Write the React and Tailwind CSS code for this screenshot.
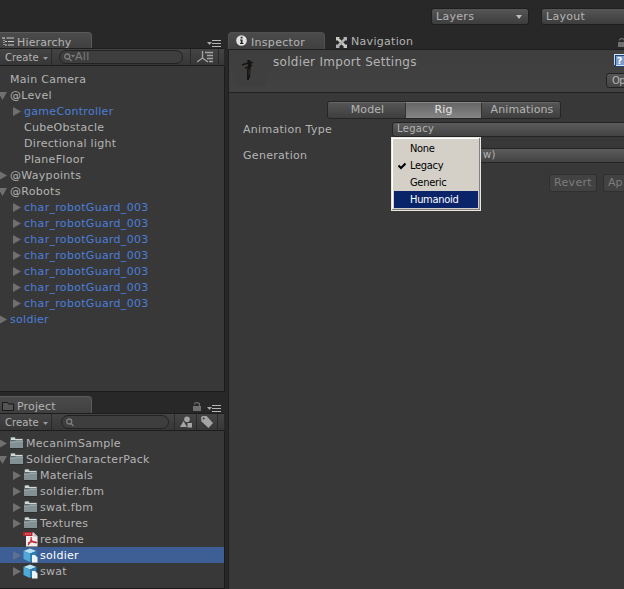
import React, { Fragment } from 'react'
import clsx from 'clsx'

const hierarchy = [
  { name: 'Main Camera', depth: 0 },
  { name: '@Level', depth: 0, arrow: 'down' },
  { name: 'gameController', depth: 1, arrow: 'right', prefab: true },
  { name: 'CubeObstacle', depth: 1 },
  { name: 'Directional light', depth: 1 },
  { name: 'PlaneFloor', depth: 1 },
  { name: '@Waypoints', depth: 0, arrow: 'right' },
  { name: '@Robots', depth: 0, arrow: 'down' },
  ...Array.from({ length: 7 }, () => ({ name: 'char_robotGuard_003', depth: 1, arrow: 'right', prefab: true })),
  { name: 'soldier', depth: 0, arrow: 'right', prefab: true },
]

const assets = [
  { name: 'MecanimSample', depth: 0, arrow: 'right', icon: 'folder' },
  { name: 'SoldierCharacterPack', depth: 0, arrow: 'down', icon: 'folder' },
  { name: 'Materials', depth: 1, arrow: 'right', icon: 'folder' },
  { name: 'soldier.fbm', depth: 1, arrow: 'right', icon: 'folder' },
  { name: 'swat.fbm', depth: 1, arrow: 'right', icon: 'folder' },
  { name: 'Textures', depth: 1, arrow: 'right', icon: 'folder' },
  { name: 'readme', depth: 1, icon: 'pdf' },
  { name: 'soldier', depth: 1, arrow: 'right', icon: 'model', selected: true },
  { name: 'swat', depth: 1, arrow: 'right', icon: 'model' },
]

const App = () => {
  return (
    <div className="flex h-[589px] w-[624px] flex-col overflow-hidden whitespace-nowrap bg-[#282828] font-['DejaVu_Sans',sans-serif] text-[11px] leading-4 tracking-[0.3px] text-[#b4b4b4]">
      <div className="flex h-8 shrink-0 gap-3 pl-[431px] pt-2">
        <div className="flex h-[17px] w-[98px] shrink-0 items-center justify-between rounded-[3px] border border-[#1f1f1f] bg-linear-to-b from-[#565656] to-[#3d3d3d] pl-1 pr-1.5">
          <span>Layers</span>
          <Caret />
        </div>
        <div className="flex h-[17px] w-[98px] shrink-0 items-center rounded-[3px] border border-[#1f1f1f] bg-linear-to-b from-[#565656] to-[#3d3d3d] pl-1">
          Layout
        </div>
      </div>
      <div className="flex min-h-0 flex-1 gap-[3px]">
        <div className="flex w-[225px] shrink-0 flex-col gap-1">
          <HierarchyPanel />
          <ProjectPanel />
        </div>
        <Inspector />
      </div>
    </div>
  )
}

export default App

const HierarchyPanel = () => (
  <div className="flex h-[360px] shrink-0 flex-col">
    <div className="flex h-4 shrink-0 items-end justify-between">
      <PanelTab title="Hierarchy">
        <svg className="mb-0.5 mr-[3px] h-[9px] w-3" viewBox="0 0 12 9" stroke="#c8c8c8" strokeWidth="1.2" fill="none">
          <path d="M0 1h3M4.500 1h7.500M3 4.500h2M6 4.500h6M3 8h2M6 8h6" />
          <path d="M2 1v7" strokeDasharray="1 1" />
        </svg>
      </PanelTab>
      <MenuIcon />
    </div>
    <Toolbar>
      <div className="ml-[7px] flex h-3.5 w-[124px] items-center rounded-full border border-[#222] bg-[#3e3e3e] pl-1 text-[#7f7f7f]">
        <SearchIcon arrow />
        <span className="-ml-px text-[11px]">All</span>
      </div>
      <div className="ml-[7px] flex h-full w-[29px] items-center justify-center border-x border-[#292929]">
        <svg className="h-3 w-4" viewBox="0 0 16 12" fill="none" stroke="#a5a5a5" strokeWidth="1.3">
          <path d="M5.5 0v7L0 11M5.5 7L11 11M8 1.5h8M10 4.5h6M10 7.5h6M12 10.5h4" />
        </svg>
      </div>
    </Toolbar>
    <Tree rows={hierarchy} className="pt-[5px]" />
  </div>
)

const ProjectPanel = () => (
  <div className="flex min-h-0 flex-1 flex-col">
    <div className="flex h-[17px] shrink-0 items-end justify-between">
      <PanelTab title="Project">
        <svg className="mb-[3px] mr-[3px] h-3 w-3" viewBox="0 0 12 12">
          <path d="M.5 10.500v-8h5l1 1.500h5v6.500z" fill="#555" stroke="#171717" />
        </svg>
      </PanelTab>
      <div className="flex items-end">
        <LockIcon className="mb-[2px] mr-1.5 h-[9px] w-2" />
        <MenuIcon />
      </div>
    </div>
    <Toolbar>
      <div className="ml-[9px] flex h-3.5 w-[108px] items-center rounded-full border border-[#222] bg-[#3e3e3e] pl-1">
        <SearchIcon />
      </div>
      <div className="ml-[5px] flex h-full w-[22px] items-center justify-center border-l border-[#292929]">
        <svg className="h-3 w-3" viewBox="0 0 12 12" fill="#a5a5a5">
          <circle cx="7" cy="3.2" r="2.8" />
          <path d="M3.5 5L7 11H0zM7.5 7H12v4.5H7.5z" />
        </svg>
      </div>
      <div className="flex h-full w-[22px] items-center justify-center border-x border-[#292929]">
        <svg className="h-3 w-3" viewBox="0 0 12 12">
          <path d="M0 1.5L1.5 0h4L12 7l-4.5 5L.5 5.5z" fill="#a5a5a5" />
          <circle cx="2.7" cy="2.6" r="1" fill="#3a3a3a" />
        </svg>
      </div>
    </Toolbar>
    <Tree rows={assets} className="pt-1" />
  </div>
)

const PanelTab = ({ title, children }) => (
  <div className="flex h-full w-[92px] items-center rounded-tr-[4px] border-r border-t border-[#5a5a5a] bg-linear-to-b from-[#4b4b4b] to-[#404040] pl-[2px] pt-1">
    {children}
    <span className="tracking-[0.15px]">{title}</span>
  </div>
)

const Toolbar = ({ children }) => (
  <div className="flex h-[18px] w-[224px] shrink-0 items-center border-y border-[#1d1d1d] bg-linear-to-b from-[#444] to-[#373737]">
    <div className="flex h-full w-[52px] items-center justify-between border-r border-[#292929] pl-[5px] pr-[3px] pt-0.5 text-[10px] tracking-[0.1px]">
      <span>Create</span>
      <svg className="h-[3px] w-[5px]" viewBox="0 0 5 3"><path d="M0 0h5L2.5 3z" fill="#999" /></svg>
    </div>
    {children}
  </div>
)

const Tree = ({ rows, className }) => (
  <div className={clsx('flex min-h-0 w-[225px] flex-1 flex-col border-b border-r border-[#1b1b1b] bg-[#383838]', className)}>
    {rows.map((row, i) => (
      <div
        key={i}
        className={clsx(
          'flex h-4 shrink-0 items-center',
          row.depth ? 'pl-3' : '-ml-0.5',
          row.selected ? 'bg-[#3e5f96] text-white' : row.prefab && 'text-[#4c7eda]'
        )}
      >
        <span className={clsx('flex shrink-0', row.icon ? 'w-[11px]' : 'w-3')}>
          {row.arrow && <Arrow dir={row.arrow} dim={row.selected} />}
        </span>
        {row.icon && <AssetIcon type={row.icon} />}
        <span className="pt-0.5">{row.name}</span>
      </div>
    ))}
  </div>
)

const Arrow = ({ dir, dim }) => (
  <svg className="h-[9px] w-[9px]" viewBox="0 0 9 9" fill={dim ? '#60718f' : '#707070'}>
    <path d={dir === 'down' ? 'M0 1h9L4.5 9z' : 'M1 0v9l8-4.5z'} />
  </svg>
)

const AssetIcon = ({ type }) => {
  if (type === 'pdf') {
    return (
      <svg className="mr-0.5 h-[15px] w-[15px] shrink-0" viewBox="0 0 15 15">
        <path d="M3 .5h7.500l4 4v10H3z" fill="#f3eeee" />
        <path d="M10.500 .5v4h4z" fill="#bdbdbd" />
        <path d="M0 0h9.500v4H0z" fill="#b8202b" />
        <path d="M2 2h6" stroke="#e9a3a7" strokeDasharray="1.5 .7" />
        <path d="M8 5c1 4-1 6-3 8M8 7c1 3 3 4 6 3.500M5 11c2-1 5-2 8-1" fill="none" stroke="#c22a35" strokeWidth="1.3" />
      </svg>
    )
  }
  if (type === 'model') {
    return (
      <svg className="mr-0.5 h-[15px] w-[15px] shrink-0" viewBox="0 0 15 15">
        <path d="M.5 3L7 .5 13.500 3 7 5.500z" fill="#b5e3f6" />
        <path d="M.5 3L7 5.500V14L.5 11z" fill="#51a9d8" />
        <path d="M7 5.500L13.500 3v8L7 14z" fill="#2d7fb3" />
        <path d="M9 7h3l2.500 2.500V14.500H9z" fill="#edf3f6" />
      </svg>
    )
  }
  return (
    <svg className="mr-0.5 h-[15px] w-[15px] shrink-0" viewBox="0 0 15 15">
      <path d="M1 12.500V2l1-1h4l1 1.500h7v10z" fill="#5d696b" />
      <path d="M2 1.500h4V3h7.500v1H2z" fill="#d3d9da" />
      <path d="M1 6h4.500l1-1H14v7.500H1z" fill="#829194" />
      <path d="M1 6h4.500l1-1H14" fill="none" stroke="#b6c3c5" strokeWidth=".8" />
      <path d="M1 12.500h13" stroke="#2a2e2f" />
    </svg>
  )
}

const Inspector = () => (
  <div className="flex min-w-0 flex-1 flex-col">
    <div className="flex h-[17px] shrink-0 items-end">
      <div className="flex h-full w-[97px] shrink-0 items-center rounded-t-[4px] border-x border-t border-[#505050] bg-linear-to-b from-[#4b4b4b] to-[#404040] pl-[7px] pt-[3px]">
        <svg className="mb-1 mr-[4px] h-[11px] w-[11px]" viewBox="0 0 11 11">
          <circle cx="5.5" cy="5.5" r="5.300" fill="#e2e2e2" />
          <path d="M4.700 1.800h1.800v1.600H4.700zM4 4.500h2.500v3.600h1V9H4v-.9h.8V5.400H4z" fill="#222" />
        </svg>
        <span>Inspector</span>
      </div>
      <div className="flex h-full shrink-0 items-center pl-[11px] pt-[3px]">
        <svg className="mr-1 h-[11px] w-[11px]" viewBox="0 0 11 11" fill="#c8c8c8">
          <path d="M0 0h4L2.900 1.100l7 7L11 7v4H7l1.100-1.100-7-7L0 4z" />
          <path d="M11 0v4L9.900 2.900l-7 7L4 11H0V7l1.100 1.100 7-7L7 0z" fill="#b0b0b0" />
        </svg>
        <span className="w-[62px]">Navigation</span>
      </div>
      <LockIcon className="mb-[2px] ml-[205px] h-[9px] w-2 shrink-0" />
    </div>
    <div className="flex min-h-0 flex-1 flex-col border-l border-t border-[#1f1f1f] bg-[#383838]">
      <div className="flex h-[43px] shrink-0 border-b border-[#232323] bg-linear-to-b from-[#3e3e3e] to-[#424242]">
        <div className="ml-1.5 mt-1 h-8 w-8 shrink-0 bg-[#3f3f3f] pl-1.5 pt-1">
          <svg className="h-[24px] w-[14px]" viewBox="0 0 14 24" fill="none" stroke="#171513">
            <path d="M8 2v3M8.500 5l-1 15" strokeWidth="3" />
            <path d="M1 7l6-2 5-.5M4 10l4-1 3-2" strokeWidth="1.6" />
            <path d="M7 11v11" strokeWidth="2" />
            <path d="M8 11v6" stroke="#3a2c1b" />
          </svg>
        </div>
        <span className="ml-1.5 mt-1 w-[332px] shrink-0 text-[12px]">soldier Import Settings</span>
        <div className="ml-px flex shrink-0 flex-col pt-[3px]">
          <svg className="ml-[7px] h-[15px] w-[15px]" viewBox="0 0 15 15">
            <path d="M1 1h14v13H3l-2-2z" fill="#1c447b" />
            <path d="M3 3h12v9H3z" fill="#7c9dcb" />
            <path d="M1.500 1v11" stroke="#c6dbf3" />
            <path d="M2 1.500h13M3 12.500h12" stroke="#dbe5f2" />
            <text x="4" y="10.500" fill="#fff" fontSize="9" fontWeight="bold">?</text>
          </svg>
          <div className="mt-[5px] flex h-[15px] w-[32px] items-center rounded-[3px] border border-[#222] bg-linear-to-b from-[#565656] to-[#444] pl-[5px] text-[10px] tracking-[-0.5px]">
            Op
          </div>
        </div>
      </div>
      <div className="ml-[98px] mt-2 flex h-[18px] w-[234px] shrink-0 overflow-hidden rounded-[3px] border border-[#252525] text-center tracking-[0.1px]">
        <div className="w-[77px] border-t border-[#666] bg-linear-to-b from-[#555] to-[#3e3e3e] pl-0.5 leading-[14px]">Model</div>
        <div className="w-[77px] border-x border-t border-x-[#333] border-t-[#888] bg-linear-to-b from-[#666] to-[#858585] leading-[14px] text-[#e4e4e4]">Rig</div>
        <div className="w-[78px] border-t border-[#666] bg-linear-to-b from-[#555] to-[#3e3e3e] pl-0.5 leading-[14px]">Animations</div>
      </div>
      <Field label="Animation Type" className="mt-[2px]">
        <span>Legacy</span>
        <AnimationMenu />
      </Field>
      <Field label="Generation" className="mt-[10px]">
        <span className="ml-[86px]">w)</span>
      </Field>
      <div className="mt-[11px] flex shrink-0 gap-1.5 pl-[320px] text-[#7c7c7c]">
        <div className="h-[18px] w-[48px] shrink-0 rounded-[3px] border border-[#2f2f2f] bg-[#424242] text-center">Revert</div>
        <div className="h-[18px] w-[48px] shrink-0 rounded-[3px] border border-[#2f2f2f] bg-[#424242] pl-1 tracking-normal">Ap</div>
      </div>
    </div>
  </div>
)

const Field = ({ label, className, children }) => (
  <div className={clsx('flex h-4 shrink-0 items-center pl-3.5', className)}>
    <span className="w-[149px] shrink-0 pt-0.5">{label}</span>
    <div className="relative flex h-[15px] w-[240px] shrink-0 items-center rounded-[3px] border border-[#242424] bg-linear-to-b from-[#5c5c5c] to-[#434343] pl-1 text-[10px]">
      {children}
    </div>
  </div>
)

const AnimationMenu = () => (
  <div className="absolute -left-[2px] top-[14px] z-10 h-[74px] w-[90px] border border-[#e8e6df] bg-[#d4d0c8] px-[2px] pt-[2px] font-['DejaVu_Sans_Condensed','DejaVu_Sans',sans-serif] text-[11px] leading-[17px] tracking-[-0.3px] text-black shadow-[inset_-1px_-1px_0_#808080,inset_1px_1px_0_#fff]">
    {['None', 'Legacy', 'Generic', 'Humanoid'].map(item => (
      <Fragment key={item}>
        <div className={clsx('flex h-[17px] items-center', item === 'Humanoid' && 'bg-[#0a246a] text-white')}>
          <span className="w-4 pl-1">
            {item === 'Legacy' &&
              <svg className="mt-0.5 h-2 w-2" viewBox="0 0 8 8" fill="none" stroke="#000" strokeWidth="2">
                <path d="M.5 3.500L3 6l4.500-4.500" />
              </svg>
            }
          </span>
          <span>{item}</span>
        </div>
      </Fragment>
    ))}
  </div>
)

const Caret = () => (
  <svg className="h-1 w-1.5" viewBox="0 0 6 4"><path d="M0 0h6L3 4z" fill="#bdbdbd" /></svg>
)

const MenuIcon = () => (
  <svg className="mb-px mr-1 h-[7px] w-[14px] shrink-0" viewBox="0 0 14 7">
    <path d="M0 2h5L2.500 5z" fill="#aaa" />
    <path d="M5 .5h9M5 3.500h9M5 6.500h9" stroke="#b5b5b5" />
  </svg>
)

const SearchIcon = ({ arrow }) => (
  <svg className="h-[9px] w-3 shrink-0" viewBox="0 0 12 9" fill="none" stroke="#7f7f7f" strokeWidth="1.300">
    <circle cx="3.200" cy="3.500" r="2.500" />
    <path d="M5 5.500l2.500 2.500" />
    {arrow && <path d="M7 2h4L9 4.500z" fill="#7f7f7f" stroke="none" />}
  </svg>
)

const LockIcon = ({ className }) => (
  <svg className={className} viewBox="0 0 8 9">
    <path d="M0 4h8v5H0z" fill="#6f6f6f" />
    <path d="M1.500 2.500c0-2.500 5-2.500 5 0V4" fill="none" stroke="#6f6f6f" strokeWidth="1.200" />
  </svg>
)
